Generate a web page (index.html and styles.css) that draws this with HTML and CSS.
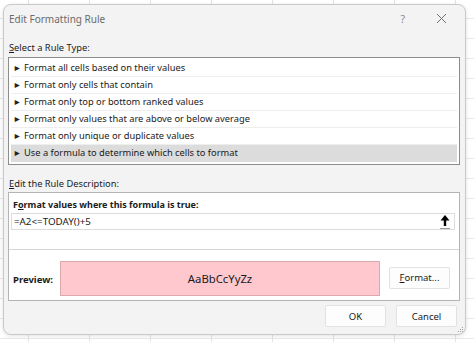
FILE: index.html
```html
<!DOCTYPE html>
<html lang="en">
<head>
    <meta charset="UTF-8">
    <meta name="viewport" content="width=device-width, initial-scale=1.0">
    <title>Edit Formatting Rule</title>
    <link rel="stylesheet" href="styles.css">
</head>
<body>
    <div class="dialog">
        <div class="titlebar">
            <span class="title">Edit Formatting Rule</span>
            <span class="help">?</span>
            <span class="close">
                <svg width="11" height="11" viewBox="0 0 11 11">
                    <path d="M1 1 L10 10 M10 1 L1 10" stroke="#707070" stroke-width="1" fill="none"/>
                </svg>
            </span>
        </div>

        <div class="section-label"><u>S</u>elect a Rule Type:</div>
        <ul class="rule-list">
            <li><span class="tri">&#9658;</span>Format all cells based on their values</li>
            <li><span class="tri">&#9658;</span>Format only cells that contain</li>
            <li><span class="tri">&#9658;</span>Format only top or bottom ranked values</li>
            <li><span class="tri">&#9658;</span>Format only values that are above or below average</li>
            <li><span class="tri">&#9658;</span>Format only unique or duplicate values</li>
            <li class="selected"><span class="tri">&#9658;</span>Use a formula to determine which cells to format</li>
        </ul>

        <div class="section-label desc-label"><u>E</u>dit the Rule Description:</div>
        <div class="desc-box">
            <div class="criteria">
                <div class="criteria-label">F<u>o</u>rmat values where this formula is true:</div>
                <div class="formula">
                    <span class="formula-text">=A2&lt;=TODAY()+5</span>
                    <span class="collapse-btn">
                        <svg width="14" height="16" viewBox="0 0 14 16">
                            <path d="M7 1 L2.5 6.5 L5.8 6.5 L5.8 12 L8.2 12 L8.2 6.5 L11.5 6.5 Z" fill="#000"/>
                            <path d="M2 14.5 H12" stroke="#9a9a9a" stroke-width="1"/>
                        </svg>
                    </span>
                </div>
            </div>
            <div class="preview-row">
                <span class="preview-label">Preview:</span>
                <div class="preview-box">AaBbCcYyZz</div>
                <button class="btn format-btn"><u>F</u>ormat...</button>
            </div>
        </div>

        <div class="footer">
            <button class="btn">OK</button>
            <button class="btn">Cancel</button>
        </div>
        <svg class="grip" width="7" height="7" viewBox="0 0 7 7">
            <rect x="5" y="1" width="1" height="1" fill="#a0a0a0"/>
            <rect x="3" y="3" width="1" height="1" fill="#a0a0a0"/>
            <rect x="5" y="3" width="1" height="1" fill="#a0a0a0"/>
            <rect x="1" y="5" width="1" height="1" fill="#a0a0a0"/>
            <rect x="3" y="5" width="1" height="1" fill="#a0a0a0"/>
            <rect x="5" y="5" width="1" height="1" fill="#a0a0a0"/>
        </svg>
    </div>
</body>
</html>
```

FILE: styles.css
```css
html, body {
    margin: 0;
    padding: 0;
}
body {
    width: 474px;
    height: 342px;
    overflow: hidden;
    font-family: "Noto Sans", "Open Sans", sans-serif;
    font-size: 9.3px;
    color: #1a1a1a;
    background-color: #fff;
    background-image:
        linear-gradient(to right, #e3e3e3 1px, transparent 1px),
        linear-gradient(to bottom, #e8e8e8 1px, transparent 1px);
    background-size: 61px 100%, 100% 20px;
    background-position: 28px 0, 0 18px;
}
.dialog {
    position: relative;
    box-sizing: border-box;
    margin: 4px 0 0 3px;
    width: 463px;
    height: 331px;
    background: #f3f3f3;
    border: 1px solid #c9c9c9;
    border-radius: 8px;
    box-shadow: 0 1px 4px rgba(0, 0, 0, 0.12);
    padding: 0 5px 0 4px;
    display: flex;
    flex-direction: column;
}
.titlebar {
    height: 27px;
    display: flex;
    align-items: center;
    padding-left: 1px;
}
.title {
    flex: 1;
    font-size: 10px;
    color: #6b6b6b;
}
.help {
    color: #8a8a8a;
    font-size: 10.5px;
    margin-right: 31px;
}
.close {
    display: flex;
    margin-right: 13px;
}
.section-label {
    height: 15px;
    line-height: 15px;
    margin-top: 8px;
    padding-left: 1px;
}
.rule-list {
    list-style: none;
    margin: 2px 0 0 0;
    padding: 2px;
    background: #fff;
    border: 1px solid #8c8c8c;
}
.rule-list li {
    height: 16px;
    line-height: 16px;
    border-bottom: 1px solid #eeeeee;
    padding-left: 2px;
    white-space: nowrap;
}
.rule-list li:last-child {
    border-bottom: none;
    height: 17px;
}
.rule-list li.selected {
    background: #dcdcdc;
}
.tri {
    display: inline-block;
    font-size: 8.5px;
    width: 11px;
    vertical-align: top;
    color: #222;
}
.desc-label {
    margin-top: 11px;
}
.desc-box {
    margin-top: 1px;
    background: #fff;
    border: 1px solid #b4b4b4;
    height: 109px;
    box-sizing: border-box;
}
.criteria {
    height: 52px;
    border-bottom: 1px solid #d6d6d6;
    padding: 4px 4px 0 2px;
}
.criteria-label {
    font-weight: bold;
    font-size: 9px;
    padding-left: 2px;
    height: 15px;
    line-height: 15px;
}
.formula {
    margin-top: 1px;
    height: 17px;
    box-sizing: border-box;
    border: 1px solid #dcdcdc;
    display: flex;
    align-items: center;
    justify-content: space-between;
    padding-left: 2px;
}
.formula-text {
    font-size: 9.8px;
}
.collapse-btn {
    display: flex;
    margin-right: 2px;
}
.preview-row {
    display: flex;
    align-items: center;
    height: 56px;
    padding: 0 0 0 4px;
}
.preview-label {
    font-weight: bold;
    font-size: 9.5px;
    width: 47px;
    margin-top: 3px;
}
.preview-box {
    width: 320px;
    height: 35px;
    box-sizing: border-box;
    background: #ffc7ce;
    border: 1px solid #dba9ab;
    display: flex;
    align-items: center;
    justify-content: center;
    font-size: 11.3px;
    margin-top: 1px;
}
.btn {
    font-family: inherit;
    font-size: 9.5px;
    color: #1a1a1a;
    background: #fdfdfd;
    border: 1px solid #e2e2e2;
    border-radius: 2px;
    width: 61px;
    height: 22px;
    padding: 0;
}
.format-btn {
    margin-left: 9px;
    margin-top: -1px;
}
.footer {
    display: flex;
    justify-content: flex-end;
    gap: 10px;
    margin-top: 4px;
    padding-right: 3px;
}
.grip {
    position: absolute;
    right: 1px;
    bottom: 1px;
}
```
